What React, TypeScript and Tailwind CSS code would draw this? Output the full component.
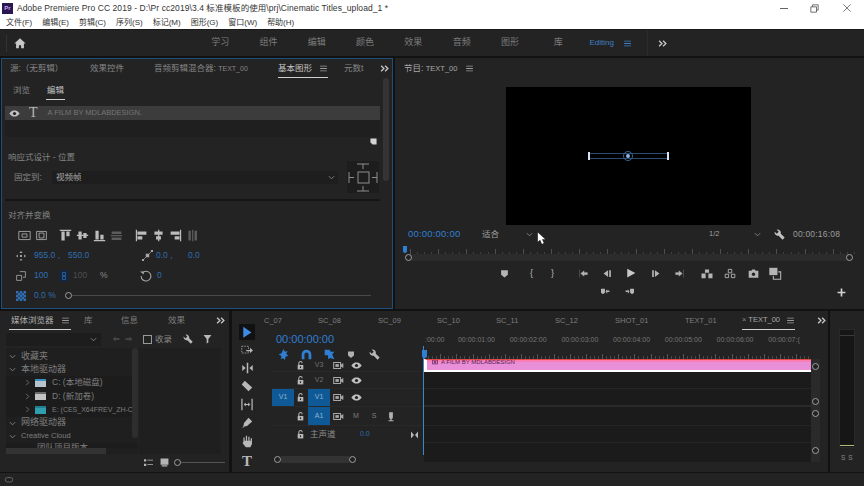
import React from "react"

function Ico({ className, children, box = 16 }: { className: string; children: React.ReactNode; box?: number }) {
  return (
    <svg viewBox={`0 0 ${box} ${box}`} className={`shrink-0 ${className}`} fill="currentColor">
      {children}
    </svg>
  )
}

const Menu = ({ className = "text-[#9a9a9a]" }: { className?: string }) => (
  <Ico className={`w-[9px] h-[9px] ${className}`}>
    <path d="M2 3h12v1.600H2zM2 7.200h12v1.600H2zM2 11.400h12V13H2z" />
  </Ico>
)

const More = () => (
  <Ico className="w-[9px] h-[9px] text-[#c4c4c4]">
    <path d="M2 3l5 5-5 5M9 3l5 5-5 5" fill="none" stroke="currentColor" strokeWidth="2.400" />
  </Ico>
)

const Eye = () => (
  <Ico className="w-[11px] h-[11px] text-[#c0c0c0]">
    <path d="M0.500 8C3 4.200 5.500 3.500 8 3.500S13 4.200 15.500 8C13 11.800 10.500 12.500 8 12.500S3 11.800 0.500 8z" />
    <circle cx="8" cy="8" r="2.300" fill="#222" />
  </Ico>
)

const Lock = () => (
  <Ico className="w-[9px] h-[9px] text-[#b8b8b8]">
    <path d="M3 7h10v8H3z" />
    <path d="M5 7V4a3 3 0 0 1 6 0" fill="none" stroke="currentColor" strokeWidth="1.800" />
    <rect x="7" y="9.500" width="2" height="3" fill="#222" />
  </Ico>
)

const Film = () => (
  <Ico className="w-[11px] h-[11px] text-[#a8a8a8]">
    <path d="M1 3.500h10v9H1z" fill="none" stroke="currentColor" strokeWidth="1.500" />
    <path d="M11 7l4-2.500v7L11 9z" />
    <path d="M3.500 6h5v4h-5z" />
  </Ico>
)

const Chev = ({ className = "w-[7px] h-[7px] text-[#8c8c8c]" }: { className?: string }) => (
  <Ico className={className}>
    <path d="M2 5l6 6 6-6" fill="none" stroke="currentColor" strokeWidth="2" />
  </Ico>
)

const ChevR = () => (
  <Ico className="w-[7px] h-[7px] text-[#777]">
    <path d="M5 2l6 6-6 6" fill="none" stroke="currentColor" strokeWidth="2" />
  </Ico>
)

const Wrench = ({ className = "w-[12px] h-[12px] text-[#c4c4c4]" }: { className?: string }) => (
  <Ico className={className}>
    <path d="M1 4l3 3 3-3-3-3a4.800 4.800 0 0 1 5.800 5.800L15.500 12.500 12.500 15.500 6.800 9.800A4.800 4.800 0 0 1 1 4z" />
  </Ico>
)

const Knob = () => <span className="block w-[7px] h-[7px] shrink-0 rounded-full border-[1.500px] border-[#a0a0a0] bg-[#222]" />

function AlignIcon({ d, dim }: { d: string; dim?: boolean }) {
  return (
    <Ico className={`w-[13px] h-[13px] ${dim ? "text-[#5c5c5c]" : "text-[#bcbcbc]"}`}>
      <path d={d} />
    </Ico>
  )
}

function TitleBar() {
  return (
    <div className="h-[29px] bg-white shrink-0 text-[#333]">
      <div className="h-[16px] flex items-center pl-[2px]">
        <div className="w-[11px] h-[11px] bg-[#2b1750] text-[#c9a6f5] text-[6px] font-bold flex items-center justify-center leading-none">Pr</div>
        <div className="ml-[4px] text-[8.500px] tracking-[0.07px] whitespace-nowrap">Adobe Premiere Pro CC 2019 - D:\Pr cc2019\3.4 标准模板的使用\prj\Cinematic Titles_upload_1 *</div>
        <div className="ml-auto flex items-center text-[#555]">
          <div className="w-[8px] h-[1px] bg-[#666] mr-[22px]" />
          <Ico className="w-[9px] h-[9px] mr-[23px]">
            <path d="M1.500 5h10v9.500h-10zM4.500 5V1.500h10v9.500h-3" fill="none" stroke="currentColor" strokeWidth="1.500" />
          </Ico>
          <Ico className="w-[10px] h-[10px] mr-[12px]">
            <path d="M2 2l12 12M14 2L2 14" fill="none" stroke="currentColor" strokeWidth="1.200" />
          </Ico>
        </div>
      </div>
      <div className="h-[13px] flex items-center pl-[6px] gap-[10px] text-[8px] whitespace-nowrap">
        {["文件(F)", "编辑(E)", "剪辑(C)", "序列(S)", "标记(M)", "图形(G)", "窗口(W)", "帮助(H)"].map((m) => (
          <span key={m}>{m}</span>
        ))}
      </div>
    </div>
  )
}

function WorkspaceBar() {
  const items = ["学习", "组件", "编辑", "颜色", "效果", "音频", "图形", "库"]
  return (
    <div className="h-[27px] bg-[#232323] shrink-0 flex items-center text-[9px] text-[#7c7c7c] border-t border-[#1a1a1a]">
      <div className="w-[7px] h-[17px] border-r border-[#333]" />
      <Ico className="w-[12px] h-[12px] text-[#c8c8c8] ml-[7px]">
        <path d="M8 1.500L0.500 8.500h2.300V15h3.700v-4h3v4h3.700V8.500h2.300z" />
      </Ico>
      <div className="ml-[170px] flex">
        {items.map((t) => (
          <div key={t} className="w-[48.300px] text-center">{t}</div>
        ))}
      </div>
      <div className="ml-[7px] text-[#3f7fc4] text-[8px]">Editing</div>
      <div className="ml-[9px]"><Menu className="text-[#3f7fc4]" /></div>
      <div className="ml-[15px] h-[26px] w-[1px] bg-[#2c2c2c]" />
      <div className="ml-[10px]"><More /></div>
    </div>
  )
}

function GraphicsPanel() {
  return (
    <div className="ml-[1px] w-[392px] shrink-0 h-full bg-[#232323] border-[1.500px] border-[#1f4e7d] flex flex-col text-[#858585] text-[8.500px] relative">
      <div className="h-[19px] flex items-center pl-[8px] whitespace-nowrap shrink-0">
        <span className="w-[80px]">源:（无剪辑）</span>
        <span className="w-[64px]">效果控件</span>
        <span className="w-[124px]">音频剪辑混合器: <span className="text-[7px]">TEXT_00</span></span>
        <span className="w-[50px] flex items-center gap-[7px] text-[#c4c4c4] border-b border-[#d0d0d0] h-[19px]">基本图形<Menu /></span>
        <span className="ml-[16px] w-[28px]">元数t</span>
        <span className="ml-[8px]"><More /></span>
      </div>
      <div className="flex flex-1 min-h-0">
        <div className="flex-1 min-w-0 pl-[3px] flex flex-col">
          <div className="h-[28px] shrink-0 flex items-start pt-[6px] pl-[8px]">
            <span className="w-[24px]">浏览</span>
            <span className="ml-[9px] text-[#c0c0c0] border-b border-[#d0d0d0] pb-[2px] px-[1px]">编辑</span>
          </div>
          <div className="h-[14px] shrink-0 bg-[#3c3c3c] flex items-center pl-[4px] text-[#757575] text-[7.500px]">
            <Eye />
            <span className="ml-[9px] text-[#b8b8b8] text-[14px] font-['Liberation_Serif',serif] leading-none">T</span>
            <span className="ml-[10px]">A FILM BY MDLABDESIGN.</span>
          </div>
          <div className="h-[17px] shrink-0 bg-[#1f1f1f]" />
          <div className="h-[64px] shrink-0 relative border-b-2 border-[#151515]">
            <Ico className="absolute right-[3px] top-[1px] w-[7px] h-[7px] text-[#d4d4d4]">
              <path d="M1 1h14v14H6L1 10z" />
            </Ico>
            <div className="pt-[14px] pl-[3px]">响应式设计 - 位置</div>
            <div className="flex items-center h-[13px] mt-[7px] pl-[9px]">
              <span className="w-[38px]">固定到:</span>
              <div className="w-[286px] h-[13px] bg-[#1e1e1e] flex items-center pl-[4px] pr-[3px] text-[#a8a8a8]">
                视频帧
                <span className="ml-auto"><Chev /></span>
              </div>
              <div className="ml-[9px] w-[32px] h-[32px] bg-[#1d1d1d] shrink-0 flex items-center justify-center">
                <Ico box={32} className="w-[32px] h-[32px] text-[#8e8e8e]">
                  <path d="M10 3h12M16 3v5M10 30h12M16 30v-5M2 11v11M2 16.500h5M30 11v11M30 16.500h-5" fill="none" stroke="currentColor" />
                  <rect x="11" y="11" width="11" height="11" fill="none" stroke="currentColor" />
                </Ico>
              </div>
            </div>
          </div>
          <div className="pt-[8px] pl-[3px]">对齐并变换</div>
          <div className="flex items-center mt-[7px] pl-[13px] gap-[4px]">
            <Ico className="w-[13px] h-[13px] text-[#b4b4b4]">
              <path d="M1 3h14v10H1z M5 6h6v4H5z" fill="none" stroke="currentColor" />
            </Ico>
            <Ico className="w-[13px] h-[13px] text-[#b4b4b4]">
              <path d="M2 3h12v10H2z M5 5h6v6H5z" fill="none" stroke="currentColor" />
            </Ico>
            <div className="w-[3px]" />
            <AlignIcon d="M1 1h14v1.500H1zM3 3h4v11H3zM9 3h4v6H9z" />
            <AlignIcon d="M1 7h14v1.500H1zM3 3h4v10H3zM9 5h4v6H9z" />
            <AlignIcon d="M1 13.500h14V15H1zM3 2h4v11H3zM9 7h4v6H9z" />
            <AlignIcon dim d="M2 3h12v3H2zM1 7.500h14V9H1zM2 10.500h12v3H2z" />
            <div className="w-[4px]" />
            <AlignIcon d="M1 1h1.500v14H1zM3 3h11v4H3zM3 9h6v4H3z" />
            <AlignIcon d="M7.500 1H9v14H7.500zM3 3h10v4H3zM5 9h6v4H5z" />
            <AlignIcon d="M13.500 1H15v14h-1.500zM2 3h11v4H2zM7 9h6v4H7z" />
            <AlignIcon dim d="M3 2h3v12H3zM7.500 1H9v14H7.500zM10.500 2h3v12h-3z" />
          </div>
          <div className="flex items-center mt-[8px] pl-[11px] text-[#2f6eb3] h-[12px]">
            <Ico className="w-[10px] h-[10px] text-[#a8a8a8]">
              <path d="M8 0l2.500 3h-5zM8 16l-2.500-3h5zM0 8l3-2.500v5zM16 8l-3 2.500v-5zM6.500 6.500h3v3h-3z" />
            </Ico>
            <span className="ml-[8px] w-[34px]">955.0 ,</span>
            <span className="w-[74px]">550.0</span>
            <Ico className="w-[11px] h-[11px] text-[#a8a8a8]">
              <path d="M1 15L15 1" fill="none" stroke="currentColor" />
              <path d="M0 13h3v3H0zM13 0h3v3h-3zM5.500 5.500h5v5h-5z" />
            </Ico>
            <span className="ml-[3px] w-[32px]">0.0 ,</span>
            <span>0.0</span>
          </div>
          <div className="flex items-center mt-[8px] pl-[11px] text-[#2f6eb3] h-[12px]">
            <Ico className="w-[10px] h-[10px] text-[#a8a8a8]">
              <path d="M1 7h8v8H1zM6 1h9v9h-4" fill="none" stroke="currentColor" strokeWidth="1.300" />
            </Ico>
            <span className="ml-[8px] w-[25px]">100</span>
            <span className="w-[10px] h-[12px] bg-[#14263c] flex items-center justify-center">
              <Ico className="w-[8px] h-[10px]">
                <path d="M5 1h6v6H5zM5 9h6v6H5z" fill="none" stroke="currentColor" strokeWidth="1.500" />
              </Ico>
            </span>
            <span className="ml-[4px] w-[27px] text-[#4e4e4e]">100</span>
            <span className="w-[40px] text-[#8a8a8a]">%</span>
            <Ico className="w-[12px] h-[12px] text-[#a8a8a8]">
              <path d="M3 4a6.500 6.500 0 1 1-1.500 4" fill="none" stroke="currentColor" strokeWidth="1.400" />
              <path d="M0 2h5v4z" />
            </Ico>
            <span className="ml-[5px]">0</span>
          </div>
          <div className="flex items-center mt-[8px] pl-[11px] text-[#2f6eb3] h-[12px]">
            <Ico className="w-[10px] h-[10px] text-[#2f6eb3]">
              <path d="M0 0h4v4H0zM6 0h4v4H6zM12 0h4v4h-4zM3 3h4v4H3zM9 3h4v4H9zM0 6h4v4H0zM6 6h4v4H6zM12 6h4v4h-4zM3 9h4v4H3zM9 9h4v4H9zM0 12h4v4H0zM6 12h4v4H6zM12 12h4v4h-4z" />
            </Ico>
            <span className="ml-[8px] w-[31px]">0.0 %</span>
            <Knob />
            <div className="h-[1px] w-[299px] bg-[#4a4a4a]" />
          </div>
        </div>
        <div className="w-[12px] shrink-0 flex justify-center">
          <div className="w-[6px] h-[103px] rounded-full bg-[#343434]" />
        </div>
      </div>
    </div>
  )
}

function ProgramPanel() {
  const tallTicks = Array.from({ length: 64 })
  return (
    <div className="flex-1 min-w-0 h-full bg-[#232323] flex flex-col text-[#8c8c8c] text-[8.500px] relative">
      <div className="h-[21px] flex items-center pl-[9px] gap-[8px] text-[#a8a8a8] shrink-0">
        <span>节目: <span className="text-[7.500px]">TEXT_00</span></span>
        <Menu />
      </div>
      <div className="h-[138px] mt-[8px] flex justify-center shrink-0">
        <div className="w-[245px] h-[138px] bg-black -ml-[3px] relative">
          <div className="absolute left-[83px] top-[66px] w-[79px] h-[6px] border border-[#2d4a6e]" />
          <div className="absolute left-[82px] top-[65px] w-[2px] h-[8px] bg-[#d8e4f4]" />
          <div className="absolute left-[161px] top-[65px] w-[2px] h-[8px] bg-[#d8e4f4]" />
          <div className="absolute left-[117px] top-[64px] w-[10px] h-[10px] rounded-full border border-[#3b6698]" />
          <div className="absolute left-[120px] top-[67px] w-[4px] h-[4px] rounded-full bg-[#8cb4e0]" />
        </div>
      </div>
      <div className="h-[18px] flex items-center shrink-0 relative">
        <span className="ml-[13px] w-[65px] text-[#2f7fd4] text-[9.500px] tracking-[0.2px]">00:00:00:00</span>
        <div className="ml-[5px] w-[57px] h-[11px] flex items-center justify-between pl-[4px] pr-[2px]">
          <span className="text-[#a0a0a0]">适合</span>
          <Chev />
        </div>
        <Ico className="absolute left-[141px] top-[6px] w-[11px] h-[14px] text-white" box={12}>
          <path d="M2 0v10l2.500-2 2 4.500 2-1-2-4.200H10z" />
        </Ico>
        <div className="ml-[170px] w-[59px] h-[11px] flex items-center justify-between pl-[4px] pr-[3px]">
          <span className="text-[#a0a0a0] text-[7.500px]">1/2</span>
          <Chev />
        </div>
        <span className="ml-[10px]"><Wrench className="w-[11px] h-[11px] text-[#c4c4c4]" /></span>
        <span className="ml-[8px] text-[#9c9c9c] text-[8.500px] tracking-[0.2px]">00:00:16:08</span>
      </div>
      <div className="h-[8px] mt-[3px] mx-[9px] flex items-end relative shrink-0">
        <div className="absolute left-[-1px] top-0 w-[4px] h-[7px] bg-[#2f7fd4] rounded-b-[2px]" />
        <div className="ml-[6px] flex-1 flex justify-between items-end h-[5px]">
          {tallTicks.map((_, i) => (
            <span key={i} className={`w-[1px] ${i % 4 === 0 ? "h-[5px] bg-[#4d4d4d]" : "h-[2px] bg-[#3f3f3f]"}`} />
          ))}
        </div>
      </div>
      <div className="h-[7px] ml-[13px] mr-[14px] bg-[#2c2c2c] relative flex items-center justify-between shrink-0">
        <span className="-ml-[3px]"><Knob /></span>
        <span className="-mr-[3px]"><Knob /></span>
      </div>
      <div className="h-[24px] flex items-center pl-[105px] text-[#b4b4b4] shrink-0">
        <Ico className="w-[9px] h-[9px]"><path d="M2 2h12v8l-6 5-6-5z" /></Ico>
        <span className="ml-[21px] w-[8px] text-[9px] leading-none">{"{"}</span>
        <span className="ml-[13px] w-[8px] text-[9px] leading-none">{"}"}</span>
        <Ico className="ml-[19px] w-[11px] h-[9px]"><path d="M1 1v14M3 8l6-5v3h6v4H9v3z" stroke="currentColor" strokeWidth=".500" /></Ico>
        <Ico className="ml-[14px] w-[9px] h-[9px]"><path d="M1 8l8-6v12zM11 2h3v12h-3z" /></Ico>
        <Ico className="ml-[14px] w-[10px] h-[10px] text-[#c8c8c8]"><path d="M2 1l13 7-13 7z" /></Ico>
        <Ico className="ml-[15px] w-[9px] h-[9px]"><path d="M15 8L7 2v12zM2 2h3v12H2z" /></Ico>
        <Ico className="ml-[14px] w-[11px] h-[9px]"><path d="M15 1v14M13 8L7 3v3H1v4h6v3z" stroke="currentColor" strokeWidth=".500" /></Ico>
        <Ico className="ml-[15px] w-[14px] h-[11px]"><path d="M0 8h6v7H0zM10 8h6v7h-6zM5 2h6v5H5z" /></Ico>
        <Ico className="ml-[9px] w-[14px] h-[11px]"><path d="M1 9h5v5H1zM10 9h5v5h-5zM5.500 2h5v5h-5z" fill="none" stroke="currentColor" strokeWidth="1.300" /></Ico>
        <Ico className="ml-[11px] w-[11px] h-[11px]"><path d="M1 4h4l1-2h4l1 2h4v10H1z" /><circle cx="8" cy="9" r="2.500" fill="#232323" /></Ico>
        <Ico className="ml-[9px] w-[14px] h-[13px]"><path d="M1 1h10v9H1z" /><path d="M6 11v4h9V6h-3" fill="none" stroke="currentColor" strokeWidth="1.300" /></Ico>
      </div>
      <div className="h-[12px] flex items-center pl-[204px] gap-[11px] text-[#b4b4b4] shrink-0 relative">
        <Ico className="w-[13px] h-[9px]"><path d="M0 3h7v7l-3.500 3L0 10zM15 6v3h-4v3L8 8l3-4v2z" /></Ico>
        <Ico className="w-[13px] h-[9px]"><path d="M1 6v3h4v3l3-4-3-4v2zM9 3h7v7l-3.500 3L9 10z" /></Ico>
        <Ico className="absolute right-[18px] top-[3px] w-[9px] h-[9px] text-[#d0d0d0]"><path d="M6.500 1h3v5.500H15v3H9.500V15h-3V9.500H1v-3h5.500z" /></Ico>
      </div>
    </div>
  )
}

function TreeRow({ indent, label, small, shade, icon, labelSize = "text-[8.500px]" }: { indent?: boolean; label: string; small?: boolean; shade?: boolean; icon?: string; labelSize?: string }) {
  return (
    <div className={`flex items-center whitespace-nowrap shrink-0 ${shade ? "bg-[#1c1c1c]" : ""} ${indent ? "h-[13.500px] pl-[18px]" : "h-[13px] pl-[3px]"} ${small ? "text-[7.500px]" : "text-[9px]"}`}>
      {indent ? <ChevR /> : <Chev />}
      {indent ? <span className={`ml-[4px] w-[11px] h-[8px] border-t-2 shrink-0 ${icon}`} /> : null}
      <span className={indent ? `ml-[6px] ${labelSize}` : "ml-[5px]"}>{label}</span>
    </div>
  )
}

function MediaPanel() {
  return (
    <div className="w-[229px] shrink-0 h-full bg-[#232323] flex flex-col text-[#7e7e7e] text-[8.500px]">
      <div className="h-[19px] flex items-center pl-[9px] shrink-0 whitespace-nowrap">
        <span className="w-[62px] flex items-center gap-[7px] h-[19px] text-[#b0b0b0] border-b border-[#d0d0d0] pl-[2px]">媒体浏览器<Menu /></span>
        <span className="ml-[13px] w-[37px]">库</span>
        <span className="w-[47px]">信息</span>
        <span className="w-[48px]">效果</span>
        <More />
      </div>
      <div className="h-[18px] flex items-center shrink-0 pl-[6px]">
        <div className="w-[95px] h-[13px] bg-[#1d1d1d] flex justify-end items-center pr-[4px]"><Chev /></div>
        <Ico className="ml-[11px] w-[8px] h-[8px] text-[#444]"><path d="M1 8l6-5v3h8v4H7v3z" /></Ico>
        <Ico className="ml-[5px] w-[8px] h-[8px] text-[#444]"><path d="M15 8L9 3v3H1v4h8v3z" /></Ico>
        <span className="ml-[10px] w-[9px] h-[9px] border border-[#999]" />
        <span className="ml-[3px] text-[#8a8a8a]">收录</span>
        <span className="ml-[11px]"><Wrench className="w-[10px] h-[10px] text-[#b8b8b8]" /></span>
        <Ico className="ml-[10px] w-[9px] h-[10px] text-[#b8b8b8]"><path d="M1 1h14L9.500 8v6l-3 2V8z" /></Ico>
      </div>
      <div className="flex-1 min-h-0 flex pl-[6px] pr-[8px]">
        <div className="w-[132px] relative overflow-hidden bg-[#1f1f1f] flex flex-col pt-[2px]">
          <TreeRow label="收藏夹" />
          <TreeRow label="本地驱动器" />
          <TreeRow indent shade label="C: (本地磁盘)" icon="bg-[#b8c4cc] border-[#3a8fc0]" />
          <TreeRow indent shade label="D: (新加卷)" icon="bg-[#c4c4c4] border-[#6a6a6a]" />
          <TreeRow indent shade label="E: (CES_X64FREV_ZH-C" labelSize="text-[7px]" icon="bg-[#2f9fb0] border-[#1f7f90]" />
          <TreeRow label="网络驱动器" />
          <TreeRow small label="Creative Cloud" />
          <div className="h-[5px] bg-[#1c1c1c] overflow-hidden shrink-0 pl-[31px] text-[8.500px] leading-[9px] whitespace-nowrap">团队项目版本</div>
          <div className="absolute left-0 bottom-0 h-[6px] w-[100px] bg-[#333]" />
          <div className="absolute right-[0px] top-0 h-[90px] w-[6px] rounded-full bg-[#2e2e2e]" />
        </div>
        <div className="ml-[1px] flex-1 bg-[#1f1f1f]" />
      </div>
      <div className="h-[16px] mb-[2px] flex items-center pl-[143px] shrink-0 text-[#b4b4b4]">
        <Ico className="w-[11px] h-[9px]"><path d="M0 2h4v4H0zM0 10h4v4H0zM6 3h10v1.500H6zM6 11h10v1.500H6z" /></Ico>
        <Ico className="ml-[6px] w-[9px] h-[9px]"><path d="M1 1h14v11H1zM3 13h10v2H3z" /></Ico>
        <span className="ml-[5px]"><Knob /></span>
        <div className="h-[1px] w-[44px] bg-[#555]" />
      </div>
    </div>
  )
}

function ToolsPanel() {
  return (
    <div className="ml-[3px] w-[30px] shrink-0 h-full bg-[#232323] flex flex-col items-center pt-[13px] text-[#b8b8b8] gap-[6px]">
      <div className="w-[16px] h-[16px] -mb-[2px] bg-[#111] flex items-center justify-center">
        <Ico className="w-[12px] h-[12px] text-[#3e8be4]"><path d="M3 1l11 7.500-11 7z" /></Ico>
      </div>
      <Ico className="w-[12px] h-[12px]"><path d="M1 3h9v9H1z" fill="none" stroke="currentColor" strokeDasharray="2 1.500" /><path d="M7 8h5V5l4 3.500-4 3.500V9.500H7z" /></Ico>
      <Ico className="w-[13px] h-[12px]"><path d="M7 1h2v14H7zM5.500 8L1 4v8zM10.500 8L15 4v8z" /></Ico>
      <Ico className="w-[12px] h-[12px]"><path d="M5 1l10 9-5 5L1 6z" /></Ico>
      <Ico className="w-[14px] h-[13px]"><path d="M1 1h1.500v14H1zM13.500 1H15v14h-1.500zM4 8l2.500-2.500v2h3v-2L12 8l-2.500 2.500v-2h-3v2z" /></Ico>
      <Ico className="w-[12px] h-[12px]"><path d="M10 1l5 5-7 6-5 1 1-5zM1 15l3-3 1 1z" /></Ico>
      <Ico className="w-[13px] h-[13px]"><path d="M3 8V3h1.500v4H6V1h1.500v6H9V2h1.500v5H12V4h1.500v7l-2 4H6L2 10z" /></Ico>
      <span className="text-[15px] leading-none font-['Liberation_Serif',serif] font-bold">T</span>
    </div>
  )
}

function Track({ h, src, name, hi, children }: { h: string; src?: string; name?: string; hi?: boolean; children?: React.ReactNode }) {
  return (
    <div className={`flex items-center ${h} border-b border-[#292929]`}>
      <div className="w-[22px] h-full flex items-center">
        {src ? <span className="w-[22px] h-[17px] bg-[#0f5a96] text-[#8db4d6] text-[7px] flex items-center justify-center">{src}</span> : null}
      </div>
      <div className="ml-[2px] w-[9px]"><Lock /></div>
      <div className={`ml-[3px] w-[22px] h-full flex items-center justify-center text-[7px] ${hi ? "bg-[#0f5a96] text-[#8db4d6]" : "text-[#707070]"}`}>{name}</div>
      {children}
    </div>
  )
}

function TimelinePanel() {
  const tabs = [
    ["C_07", "w-[54px]"],
    ["SC_08", "w-[60px]"],
    ["SC_09", "w-[59px]"],
    ["SC_10", "w-[59px]"],
    ["SC_11", "w-[59px]"],
    ["SC_12", "w-[60px]"],
    ["SHOT_01", "w-[70px]"],
    ["TEXT_01", "w-[57px]"],
  ]
  const rulerLabels = ["00:00:01:00", "00:00:02:00", "00:00:03:00", "00:00:04:00", "00:00:05:00", "00:00:06:00", "00:00:07:("]
  const ticks = Array.from({ length: 96 })
  return (
    <div className="w-[566px] shrink-0 h-full bg-[#232323] flex flex-col text-[#7e7e7e] text-[8px] whitespace-nowrap">
      <div className="h-[19px] flex items-center pl-[2px] shrink-0 text-[7.500px]">
        {tabs.map(([t, w]) => (
          <span key={t} className={w}>{t}</span>
        ))}
        <span className="w-[53px] h-[19px] flex items-center border-b border-[#d0d0d0] text-[#a8a8a8]">
          <span className="w-[10px] text-[#888]">×</span>
          TEXT_00
          <span className="ml-[6px]"><Menu /></span>
        </span>
        <span className="ml-[22px]"><More /></span>
      </div>
      <div className="flex-1 min-h-0 flex">
        <div className="w-[162px] shrink-0 flex flex-col">
          <div className="pl-[14px] h-[17px] text-[#2f7fd4] text-[11px] leading-[19px] shrink-0">00:00:00:00</div>
          <div className="h-[10px] mt-[2px] flex items-center pl-[16px] text-[#2f7fd4] shrink-0">
            <Ico className="w-[11px] h-[11px]"><path d="M8 0l2 4 4-1-2 4 3 3-4 1-1 5-3-3-3 2 1-5-4-2 4-2z" /></Ico>
            <Ico className="ml-[12px] w-[11px] h-[11px]"><path d="M1 15V8a7 7 0 0 1 14 0v7h-4V8a3 3 0 0 0-6 0v7z" /></Ico>
            <Ico className="ml-[12px] w-[11px] h-[11px]"><path d="M1 1h7l2 3h5l-3 4 3 7-6-2-3 2V9H1z" /></Ico>
            <Ico className="ml-[12px] w-[8px] h-[9px] text-[#b0b0b0]"><path d="M2 2h12v8l-6 5-6-5z" /></Ico>
            <span className="ml-[14px]"><Wrench className="w-[11px] h-[11px] text-[#b8b8b8]" /></span>
          </div>
          <div className="flex flex-col pl-[10px]">
            <Track h="h-[13px]" name="V3"><span className="ml-[3px]"><Film /></span><span className="ml-[7px]"><Eye /></span></Track>
            <Track h="h-[17px]" name="V2"><span className="ml-[3px]"><Film /></span><span className="ml-[7px]"><Eye /></span></Track>
            <Track h="h-[18px]" src="V1" name="V1" hi><span className="ml-[3px]"><Film /></span><span className="ml-[7px]"><Eye /></span></Track>
            <Track h="h-[19px]" name="A1" hi>
              <span className="ml-[3px]"><Film /></span>
              <span className="ml-[9px] text-[7px]">M</span>
              <span className="ml-[13px] text-[7px]">S</span>
              <Ico className="ml-[9px] w-[10px] h-[11px] text-[#b0b0b0]"><path d="M5 1h6v8a3 3 0 0 1-6 0zM7 12h2v2h3v1.500H4V14h3z" /></Ico>
            </Track>
            <div className="flex items-center h-[17px]">
              <div className="ml-[24px] w-[9px]"><Lock /></div>
              <span className="ml-[5px] w-[50px] text-[#8c8c8c] text-[8.500px]">主声道</span>
              <span className="text-[#2f6eb3] text-[7px]">0.0</span>
              <Ico className="ml-[40px] w-[9px] h-[8px] text-[#b8b8b8]"><path d="M1 1v14l6-7zM15 1v14L9 8z" /></Ico>
            </div>
          </div>
          <div className="mt-auto mb-[5px] h-[16px] flex items-center pl-[12px] shrink-0">
            <Knob />
            <div className="h-[7px] w-[68px] bg-[#333]" />
            <Knob />
          </div>
        </div>
        <div className="flex-1 min-w-0 flex flex-col relative pr-[8px]">
          <div className="absolute left-[-1px] top-[16px] bottom-[17px] w-[1px] bg-[#3b87c9] z-10" />
          <div className="absolute left-[-2px] top-[20px] w-[5px] h-[8px] bg-[#2f7fd4] rounded-b-[2px] z-10" />
          <div className="h-[21px] flex items-center shrink-0 text-[7px] text-[#767676]">
            <span className="w-[35px] pl-[1px]">:00:00</span>
            {rulerLabels.map((l) => (
              <span key={l} className="w-[53.400px]">{l}</span>
            ))}
          </div>
          <div className="h-[8px] flex justify-between items-end shrink-0 pr-[10px]">
            {ticks.map((_, i) => (
              <span key={i} className={`w-[1px] ${i % 4 === 0 ? "h-[5px] bg-[#555]" : "h-[3px] bg-[#484848]"}`} />
            ))}
          </div>
          <div className="flex-1 min-h-0 flex">
            <div className="flex-1 min-w-0 flex flex-col bg-[#1b1b1b] mb-[10px]">
              <div className="h-[13px] shrink-0 border-l-[3px] border-l-white border-t border-t-[#e24a4a] border-b-2 border-b-white bg-[#e88fd8] overflow-hidden flex flex-col relative">
                <div className="h-[2px] bg-[#fb7eb2] shrink-0" />
                <div className="absolute left-[5px] -top-[2px] flex items-center gap-[3px] text-[6px] leading-[8px] text-[#5a1f5a]">
                  <Ico className="w-[6px] h-[6px]"><path d="M1 3h14v10H1z" fill="none" stroke="currentColor" strokeWidth="2" /><path d="M5 6h6v4H5z" /></Ico>
                  A FILM BY MDLABDESIGN
                </div>
              </div>
              <div className="h-[17px] border-b border-[#252525]" />
              <div className="h-[18px] border-b-2 border-[#292929]" />
              <div className="h-[19px] border-b border-[#252525]" />
              <div className="h-[17px] border-b border-[#252525]" />
              <div className="flex-1" />
            </div>
            <div className="w-[9px] shrink-0 bg-[#2a2a2a] flex flex-col items-center mb-[10px]">
              <span className="mt-[4px]"><Knob /></span>
              <span className="mt-[28px]"><Knob /></span>
              <span className="mt-[5px]"><Knob /></span>
              <span className="mt-[30px]"><Knob /></span>
            </div>
          </div>
        </div>
      </div>
    </div>
  )
}

function MeterPanel() {
  return (
    <div className="ml-[2px] flex-1 min-w-0 h-full bg-[#232323] flex flex-col pl-[9px] pt-[18px]">
      <div className="w-[16px] h-[119px] bg-[#161616] border border-[#2a2a2a] flex flex-col justify-end relative shrink-0">
        <div className="absolute top-0 inset-x-0 h-[6px] border-b border-[#3a3a3a]" />
        <div className="h-[1px] bg-[#b8b878] mb-[1px]" />
      </div>
      <div className="mt-[6px] pl-[2px] flex gap-[3px] text-[6.500px] leading-[8px] text-[#8a8a8a]"><span>S</span><span>S</span></div>
    </div>
  )
}

export default function App() {
  return (
    <div className="w-[864px] h-[486px] flex flex-col overflow-hidden bg-[#121212] [font-family:'Liberation_Sans','Noto_Sans_CJK_SC',sans-serif]">
      <TitleBar />
      <WorkspaceBar />
      <div className="h-[251px] mt-[2px] flex gap-[2px] shrink-0">
        <GraphicsPanel />
        <ProgramPanel />
      </div>
      <div className="h-[161px] mt-[2px] flex shrink-0">
        <MediaPanel />
        <ToolsPanel />
        <TimelinePanel />
        <MeterPanel />
      </div>
      <div className="flex-1 mt-[1px] bg-[#232323] flex items-center pl-[4px]">
        <Ico className="w-[10px] h-[8px] text-[#777]">
          <path d="M5 3h6a4 4 0 0 1 0 9H5a4 4 0 0 1 0-9z" fill="none" stroke="currentColor" strokeWidth="1.500" />
        </Ico>
      </div>
    </div>
  )
}
